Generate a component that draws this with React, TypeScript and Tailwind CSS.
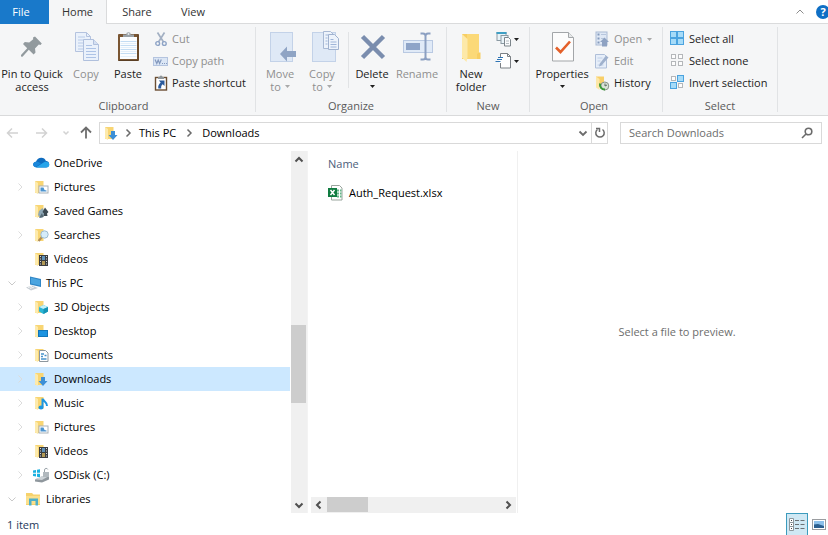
import type { ReactNode } from 'react';

const TABS = ['Share', 'View'];

type IconKind =
    | 'onedrive' | 'pictures' | 'games' | 'searches' | 'videos' | 'pc' | 'objects'
    | 'desktop' | 'documents' | 'downloads' | 'music' | 'disk' | 'libraries';

interface TreeItem {
    label: string;
    icon: IconKind;
    root?: boolean;
    arrow?: boolean;
    selected?: boolean;
}

const TREE: TreeItem[] = [
    { label: 'OneDrive', icon: 'onedrive' },
    { label: 'Pictures', icon: 'pictures', arrow: true },
    { label: 'Saved Games', icon: 'games' },
    { label: 'Searches', icon: 'searches', arrow: true },
    { label: 'Videos', icon: 'videos' },
    { label: 'This PC', icon: 'pc', root: true, arrow: true },
    { label: '3D Objects', icon: 'objects', arrow: true },
    { label: 'Desktop', icon: 'desktop', arrow: true },
    { label: 'Documents', icon: 'documents', arrow: true },
    { label: 'Downloads', icon: 'downloads', arrow: true, selected: true },
    { label: 'Music', icon: 'music', arrow: true },
    { label: 'Pictures', icon: 'pictures', arrow: true },
    { label: 'Videos', icon: 'videos', arrow: true },
    { label: 'OSDisk (C:)', icon: 'disk', arrow: true },
    { label: 'Libraries', icon: 'libraries', root: true, arrow: true },
];

// ---------- icons ----------

function Big({ children }: { children: ReactNode }) {
    return <svg className="size-8 shrink-0 overflow-visible" viewBox="0 0 32 32" fill="none">{children}</svg>;
}

function Small({ children }: { children: ReactNode }) {
    return <svg className="size-4 shrink-0 overflow-visible" viewBox="0 0 16 16" fill="none">{children}</svg>;
}

function Caret({ className }: { className: string }) {
    return (
        <svg className={`w-[5px] h-[3px] shrink-0 ${className}`} viewBox="0 0 5 3">
            <path d="M0 0h5L2.5 3z" fill="currentColor" />
        </svg>
    );
}

function Chevron({ dir, className }: { dir: 'up' | 'down' | 'left' | 'right'; className: string }) {
    const paths = {
        up: 'M1.5 6.5 5 3l3.5 3.5',
        down: 'M1.5 3.5 5 7l3.5-3.5',
        left: 'M6.5 1.5 3 5l3.5 3.5',
        right: 'M3.5 1.5 7 5 3.5 8.5',
    };
    return (
        <svg className={`size-[10px] shrink-0 ${className}`} viewBox="0 0 10 10" fill="none" stroke="currentColor">
            <path d={paths[dir]} />
        </svg>
    );
}

const PinIcon = () => (
    <Big>
        <path d="M19 5.5 25.8 12.5 24.5 14 22.8 13.5 19 17.5 19.5 21.5 17.6 23.500 12.8 18.8 6.5 25.7 5 25.5 5 24 11.2 17.2 7 12.9 8.8 11 13.2 11.6 17.2 8.2 17 6.6z" fill="#929a9e" />
    </Big>
);

const CopyIcon = () => (
    <Big>
        <path d="M5.5 1.5h11l4 4v15h-15z" fill="#eaf1fb" stroke="#b4c3df" />
        <path d="M16.5 1.5v4h4" stroke="#b4c3df" />
        <path d="M8 6h7M8 9h10M8 12h5M8 15h5M8 18h5" stroke="#b8cbe8" />
        <path d="M13.5 8.5h10l5 5v16h-15z" fill="#eaf1fb" stroke="#b0c0dd" />
        <path d="M23.5 8.5v5h5" fill="#d5e0f2" stroke="#b0c0dd" />
        <path d="M16 14.5h6M16 17.5h10M16 20.5h10M16 23.5h10M16 26.5h10" stroke="#adc3e6" />
    </Big>
);

const PasteIcon = () => (
    <Big>
        <rect x="6" y="3" width="21" height="27" rx="1" fill="#7a5633" />
        <path d="M26 3.5v26H6.5" stroke="#5b3f25" />
        <rect x="8" y="6" width="17" height="22" fill="#fbfdff" />
        <path d="M8.500 10.5h16M8.500 14.5h16M8.500 18.5h16M8.500 22.5h16" stroke="#c3dcf3" />
        <path d="M8.500 12.5h16M8.500 16.5h16M8.500 20.5h16M8.500 25.5h16" stroke="#e3effa" />
        <path d="M11 6V3.500h3.200a2.300 2.300 0 0 1 4.600 0H22V6z" fill="#9aa2a8" />
        <circle cx="16.500" cy="3" r="1" fill="#e8ecee" />
    </Big>
);

const CutIcon = () => (
    <Small>
        <path d="M4.500 1.500 10.500 11M11.500 1.500 5.500 11" stroke="#a3b0c3" strokeWidth="1.700" />
        <circle cx="4.700" cy="12.500" r="1.900" stroke="#8da3c6" strokeWidth="1.400" />
        <circle cx="11.300" cy="12.500" r="1.900" stroke="#8da3c6" strokeWidth="1.400" />
    </Small>
);

const CopyPathIcon = () => (
    <Small>
        <rect x="0.500" y="4.500" width="14" height="8" fill="#dbe6f5" stroke="#b4c4df" />
        <path d="M2 6.500 3.800 10.500 5.200 7 6.600 10.500 8.300 6.500" stroke="#8499be" strokeWidth="1.200" />
        <path d="M9 10.500h1M11 10.500h1M13 10.500h1" stroke="#8499be" />
    </Small>
);

const PasteShortcutIcon = () => (
    <Small>
        <rect x="2.500" y="2.500" width="11" height="12.500" fill="#fff" stroke="#6b4e33" strokeWidth="1.400" />
        <path d="M5 4V2h1.500a1.500 1.500 0 0 1 3 0H11v2z" fill="#8e959a" />
        <path d="M5.800 5.500H11.500V11L9.700 9.300C8.400 10.400 8 11.500 8.200 13.500H5.300C4.800 11 5.800 9 7.700 7.400z" fill="#2b5a9c" />
    </Small>
);

const MoveIcon = () => (
    <Big>
        <rect x="6.500" y="1.500" width="22" height="29" fill="#dfe9f6" stroke="#c3d2e8" />
        <path d="M16 23 23 15.500V20h9v6h-9v4.500z" fill="#8fa4c4" />
    </Big>
);

const CopyToIcon = () => (
    <Big>
        <rect x="6.500" y="1.500" width="23" height="29" fill="#dfe9f6" stroke="#c3d2e8" />
        <path d="M17.500.500h7l3 3v14h-10z" fill="#edf3fb" stroke="#a8b9d4" />
        <path d="M22.500 3.500h6l4 4v11h-10z" fill="#edf3fb" stroke="#a0b2cf" />
        <path d="M19.500 4h3M19.500 7h2M19.500 10h2M19.500 13h2M24.500 8.500h3M24.500 11h6M24.500 13.500h6M24.500 16h6" stroke="#9fb5d8" />
    </Big>
);

const DeleteIcon = () => (
    <Big>
        <path d="M6.500 5.500 27.500 26.500M27.500 5.500 6.500 26.500" stroke="#7a8dae" strokeWidth="4.500" />
    </Big>
);

const RenameIcon = () => (
    <Big>
        <rect x="2.500" y="9.500" width="29" height="12" fill="#e0eaf7" stroke="#b9c9e2" />
        <rect x="5" y="12" width="14" height="7" fill="#8ea4c8" />
        <path d="M24.500 4v23M19.500 2.500h2.500q2.500 0 2.500 2.500 0-2.500 2.500-2.500h2.500M19.500 28.500h2.500q2.500 0 2.500-2.500 0 2.500 2.500 2.500h2.500" stroke="#8b9fc1" strokeWidth="2" />
    </Big>
);

const NewFolderIcon = () => (
    <Big>
        <path d="M7 3h17v18.500h1.500V28H7z" fill="#f7ce63" />
        <path d="M12 3h12v18.500l-2 1.500V28H12z" fill="#fbd978" />
        <path d="M7 3 12.500 8V26l-1 5L7 26.500z" fill="#fde9a9" />
    </Big>
);

const NewItemIcon = () => (
    <Small>
        <rect x="1" y="1.500" width="9" height="8" fill="#e8f3f8" stroke="#8b9aa3" />
        <path d="M.500 2h10" stroke="#3f9fc4" strokeWidth="2" />
        <rect x="5" y="4.500" width="7" height="8" fill="#eaf4f9" stroke="#8b9aa3" />
        <path d="M8.500 6.500h4l2 2v6.500h-6z" fill="#fafbfc" stroke="#7c858b" />
        <path d="M10 10h3M10 12.500h3" stroke="#b5bdc2" />
    </Small>
);

const EasyAccessIcon = () => (
    <Small>
        <path d="M4.500.500h7l3 3v11.500h-10z" fill="#fff" stroke="#7b8085" />
        <path d="M11.500.500v3h3" stroke="#7b8085" />
        <path d="M3 10V4h3v6z" fill="#fff" />
        <path d="M2 4.500h5M1 6.500h5M-.500 8.500h5" stroke="#2f75b5" strokeWidth="1.200" />
    </Small>
);

const PropertiesIcon = () => (
    <Big>
        <path d="M6.500 1.500h16l5 5v23.500h-21z" fill="#fcfcfc" stroke="#a3a6a9" />
        <path d="M22.500 1.500v5h5" fill="#e7e9ea" stroke="#a3a6a9" />
        <path d="M10 16.500 14.500 21 24 10.500" stroke="#e4602a" strokeWidth="2.600" />
    </Big>
);

const OpenIcon = () => (
    <Small>
        <rect x="1" y="1" width="11" height="13" fill="#dfe8f5" stroke="#a9b9d3" />
        <path d="M3.500 2.500v2M3.500 6.500v2M3.500 10.500v2" stroke="#8499bb" strokeWidth="2" />
        <path d="M6 3.500h5M6 7.500h3" stroke="#b7c6dd" />
        <path d="M9.500 6.500 14 11h-2v4.500H7V11H5z" fill="#8ea2c2" />
    </Small>
);

const EditIcon = () => (
    <Small>
        <path d="M.500 1.500h9l2 2v11.500h-11z" fill="#e6eef9" stroke="#afbfd9" />
        <path d="M2.500 5h5M2.500 8h3M2.500 12h6" stroke="#c0d0e8" />
        <path d="M11 2.500 13.500 4.500 6.500 12.500 4 13.500 4.800 10.500z" fill="#9fb1cd" />
    </Small>
);

const HistoryIcon = () => (
    <Small>
        <path d="M1 1.500h8V12H1z" fill="#f8cf68" />
        <path d="M1 1.500 4.500 4v11L1 12.500z" fill="#fde7a6" />
        <circle cx="9.800" cy="11" r="4" fill="#d9e2d7" stroke="#859286" />
        <path d="M10 8.500V11l2-1" stroke="#5d6a60" />
        <path d="M5 8.500c-.500 3.500 1.500 6 5 6" stroke="#3c9a3a" strokeWidth="2" />
    </Small>
);

function SelectIcon({ filled }: { filled: boolean[] }) {
    const cells = [[1, 1], [8, 1], [1, 8], [8, 8]];
    return (
        <Small>
            {cells.map(([x, y], i) => filled[i] ? (
                <rect key={i} x={x - 0.5} y={y - 0.5} width="6" height="6" fill="#a6dbf8" stroke="#4ba3df" />
            ) : (
                <rect key={i} x={x + 0.5} y={y + 0.5} width="4" height="4" fill="#fdfdfd" stroke="#b4b7ba" />
            ))}
        </Small>
    );
}

function FolderBase() {
    return (
        <>
            <path d="M1 2h8.500v12H1z" fill="#f8d573" />
            <path d="M1 2 4 4v11L1 13.500z" fill="#fdeaac" />
        </>
    );
}

function TreeIcon({ kind }: { kind: IconKind }) {
    switch (kind) {
        case 'onedrive':
            return (
                <Small>
                    <path d="M3 12.500C.500 12.500-1 11-.800 9.200-.600 7.700.500 7 2 6.700 3 4 5 2.700 7.500 2.800c2 0 3.600 1.200 4.300 3 2 .300 3.400 1.500 3.400 3.400 0 2-1.200 3.300-3.200 3.300z" fill="#0f6cbf" />
                    <path d="M2 12.200 10 7.200c2.500-1 5.300 0 5.300 2.500 0 1.800-1.300 2.800-3.300 2.800H3z" fill="#27a4ea" />
                    <path d="M2 6.700c2-.200 3 .300 5 1.800L1.500 12C-.500 11.300-1 10.300-.800 9.200-.600 7.700.500 7 2 6.700z" fill="#1a87da" />
                </Small>
            );
        case 'pc':
            return (
                <Small>
                    <path d="M4 1.500 15 4v8L4 9.500z" fill="#2f86c6" />
                    <path d="M5 2.800 14 5v5.500L5 8.500z" fill="#4aa5e0" />
                    <path d="M0 12.500 6 10.500 12 13 5 15.500z" fill="#c7ced4" />
                    <path d="M2 12.500 6 11.300M4 13.500 8 12" stroke="#f3f5f6" />
                </Small>
            );
        case 'disk':
            return (
                <Small>
                    <path d="M-1 3.500 2 3v2.800h-3zM3 2.800 6 2.300v3.500H3zM-1 6.800h3v2.800l-3-.500zM3 6.800h3v3.500L3 9.800z" fill="#19b0e0" />
                    <path d="M1 12.500 8 9.500h7v3L8 15.500 1 14.500z" fill="#8f979d" />
                    <path d="M1 12.200 8 9h7L8 13z" fill="#cdd3d7" />
                    <rect x="9" y="5" width="6" height="5" fill="#b1b9be" />
                    <path d="M10.500 5V3a1.700 1.700 0 0 1 3.300-.500" stroke="#9ba4aa" />
                </Small>
            );
        case 'libraries':
            return (
                <Small>
                    <path d="M0 2h6l1.500 1.500H14V14H0z" fill="#f6d26c" />
                    <path d="M0 5h14v8H0z" fill="#fbe08c" />
                    <path d="M3 14.500V7.500h9v7H9.500V10h-4v4.500z" fill="#4fb0c9" />
                </Small>
            );
        case 'pictures':
            return (
                <Small>
                    <FolderBase />
                    <rect x="5" y="7" width="9" height="7" fill="#fff" stroke="#a9b1b7" />
                    <path d="M6.500 12.500v-4h3l1 2.500 2 .500v1z" fill="#4c94cf" />
                </Small>
            );
        case 'games':
            return (
                <Small>
                    <FolderBase />
                    <path d="M5 8 8.500 5 11 9l-1.500 5-3 1L4 12z" fill="#8fa9b8" />
                    <path d="M11 4.500 12.500 6.500 14.500 9 13 10.500l.500 2.500h-4l.500-2.500L8.500 9z" fill="#3d4a52" />
                    <path d="M5 15 8 10l1.500 4z" fill="#566a76" />
                </Small>
            );
        case 'searches':
            return (
                <Small>
                    <FolderBase />
                    <path d="M8 10 4.500 14" stroke="#b08d57" strokeWidth="2" />
                    <circle cx="10.500" cy="7.500" r="3.700" fill="#d5ecfa" stroke="#9dbcd0" />
                </Small>
            );
        case 'videos':
            return (
                <Small>
                    <FolderBase />
                    <rect x="5" y="4" width="9" height="11" fill="#3b3d40" />
                    <path d="M6 5.500h1M6 8h1M6 10.500h1M6 13h1M12 5.500h1M12 8h1M12 10.500h1M12 13h1" stroke="#d7d9da" />
                    <path d="M8 5h3v4H8z" fill="#5f91b8" />
                    <path d="M8 10h3v4H8z" fill="#b39a55" />
                </Small>
            );
        case 'objects':
            return (
                <Small>
                    <FolderBase />
                    <path d="M9.500 6 14 8v4.500l-4.500 2.500L5 12.500V8z" fill="#2bb6d6" />
                    <path d="M9.500 6 14 8l-4.500 2L5 8z" fill="#c4f0f8" />
                    <path d="M9.500 10 14 8v4.500l-4.500 2.500z" fill="#1593b5" />
                </Small>
            );
        case 'desktop':
            return (
                <Small>
                    <FolderBase />
                    <rect x="4.500" y="7.500" width="9" height="6" fill="#1c93e0" stroke="#1175b8" />
                </Small>
            );
        case 'documents':
            return (
                <Small>
                    <FolderBase />
                    <path d="M5.500 3.500h6l2.500 2.500v8.500H5.500z" fill="#fff" stroke="#8d979e" />
                    <path d="M7 7h3M7 9.500h2M10.500 8.500h2M7 12h5.500" stroke="#4792cc" strokeWidth="1.400" />
                </Small>
            );
        case 'downloads':
            return (
                <Small>
                    <FolderBase />
                    <path d="M7 6h4v4h2.500L9 15 4.500 10H7z" fill="#3c8fd6" />
                </Small>
            );
        case 'music':
            return (
                <Small>
                    <FolderBase />
                    <path d="M8.500 3.500v8.500M9 4c.500 3 4.500 3 4 7" stroke="#1d97e3" strokeWidth="2" />
                    <ellipse cx="7" cy="12.500" rx="2.500" ry="2" fill="#1d97e3" />
                </Small>
            );
    }
}

const ExcelIcon = () => (
    <Small>
        <path d="M3.500.500h8l2.500 2.500v12h-10.500z" fill="#fff" stroke="#9aa59e" />
        <path d="M9 5.500h4.500M9 8.500h4.500M9 11.500h4.500" stroke="#62b587" strokeWidth="2" />
        <path d="M11.500 4v9" stroke="#fff" />
        <rect x="0" y="3" width="9" height="9" fill="#107c41" />
        <path d="M2.500 5 6.500 10M6.500 5 2.500 10" stroke="#fff" strokeWidth="1.500" />
    </Small>
);

// ---------- ribbon ----------

interface BigButtonProps {
    icon: ReactNode;
    lines: string[];
    width: string;
    caret?: boolean;
    disabled?: boolean;
}

function BigButton({ icon, lines, width, caret, disabled }: BigButtonProps) {
    const caretColor = disabled ? 'text-[#a9a9a9]' : 'text-[#1f1f1f]';
    const inline = caret && lines.length > 1;
    return (
        <button disabled={disabled} className={`flex flex-col items-center pt-[7px] gap-1 whitespace-nowrap ${width} ${disabled ? 'text-[#8f8f8f]' : 'text-[#222222]'}`}>
            {icon}
            <span className="flex flex-col items-center leading-[13px]">
                {lines.map((line, i) => (
                    <span key={line} className="flex items-center gap-1">
                        {line}
                        {inline && i === lines.length - 1 && <Caret className={caretColor} />}
                    </span>
                ))}
                {caret && !inline && <span className="flex h-3 items-center"><Caret className={caretColor} /></span>}
            </span>
        </button>
    );
}

function SmallButton({ icon, label, caret, disabled }: { icon: ReactNode; label: string; caret?: boolean; disabled?: boolean }) {
    return (
        <button disabled={disabled} className={`flex h-[22px] items-center gap-[3px] whitespace-nowrap ${disabled ? 'text-[#8f8f8f]' : 'text-[#222222]'}`}>
            {icon}
            <span>{label}</span>
            {caret && <span className="pl-0.5"><Caret className="text-[#a9a9a9]" /></span>}
        </button>
    );
}

function Group({ name, width, children }: { name: string; width: string; children: ReactNode }) {
    return (
        <section aria-label={name} className={`flex shrink-0 flex-col ${width}`}>
            <div className="flex h-[73px] items-start">{children}</div>
            <div className="text-center leading-[18px] text-[#5a5a5a]">{name}</div>
        </section>
    );
}

const Divider = () => <div className="my-[3px] w-px shrink-0 bg-[#e1e3e5]" />;

function Ribbon() {
    return (
        <div className="flex shrink-0 overflow-hidden border-b border-[#d9dadb] bg-[#f5f6f7]">
            <Group name="Clipboard" width="w-[255px] pr-2">
                <BigButton icon={<PinIcon />} lines={['Pin to Quick', 'access']} width="w-16" />
                <BigButton icon={<CopyIcon />} lines={['Copy']} width="w-11" disabled />
                <BigButton icon={<PasteIcon />} lines={['Paste']} width="w-10" />
                <div className="flex flex-col pt-1 pl-[5px]">
                    <SmallButton icon={<CutIcon />} label="Cut" disabled />
                    <SmallButton icon={<CopyPathIcon />} label="Copy path" disabled />
                    <SmallButton icon={<PasteShortcutIcon />} label="Paste shortcut" />
                </div>
            </Group>
            <Divider />
            <Group name="Organize" width="w-[190px]">
                <BigButton icon={<MoveIcon />} lines={['Move', 'to']} width="w-12" caret disabled />
                <BigButton icon={<CopyToIcon />} lines={['Copy', 'to']} width="w-9" caret disabled />
                <div className="ml-2 mt-2 h-14 w-px bg-[#e1e3e5]" />
                <BigButton icon={<DeleteIcon />} lines={['Delete']} width="w-[46px]" caret />
                <BigButton icon={<RenameIcon />} lines={['Rename']} width="w-11" disabled />
            </Group>
            <Divider />
            <Group name="New" width="w-[82px]">
                <BigButton icon={<NewFolderIcon />} lines={['New', 'folder']} width="w-12" />
                <div className="flex flex-col pt-1 pl-px">
                    <button aria-label="New item" className="flex h-[22px] items-center gap-0.5"><NewItemIcon /><Caret className="text-[#1f1f1f]" /></button>
                    <button aria-label="Easy access" className="flex h-[22px] items-center gap-0.5"><EasyAccessIcon /><Caret className="text-[#1f1f1f]" /></button>
                </div>
            </Group>
            <Divider />
            <Group name="Open" width="w-[132px] pr-1">
                <BigButton icon={<PropertiesIcon />} lines={['Properties']} width="w-16" caret />
                <div className="flex flex-col pt-1 pl-px">
                    <SmallButton icon={<OpenIcon />} label="Open" caret disabled />
                    <SmallButton icon={<EditIcon />} label="Edit" disabled />
                    <SmallButton icon={<HistoryIcon />} label="History" />
                </div>
            </Group>
            <Divider />
            <Group name="Select" width="w-[114px]">
                <div className="flex flex-col pt-1 pl-[7px]">
                    <SmallButton icon={<SelectIcon filled={[true, true, true, true]} />} label="Select all" />
                    <SmallButton icon={<SelectIcon filled={[false, false, false, false]} />} label="Select none" />
                    <SmallButton icon={<SelectIcon filled={[false, true, true, false]} />} label="Invert selection" />
                </div>
            </Group>
            <Divider />
        </div>
    );
}

function TabBar() {
    return (
        <div className="flex h-6 shrink-0 items-stretch bg-white text-[#333333]">
            <button className="w-[49px] bg-[#1979ca] pr-[7px] text-white">File</button>
            <button className="-mb-px w-[58px] border-r border-[#dadbdc] bg-[#f5f6f7] pb-px">Home</button>
            <div className="flex flex-1 border-b border-[#dadbdc] pl-0.5">
                {TABS.map((tab) => <button key={tab} className="w-14">{tab}</button>)}
                <div className="ml-auto flex items-center gap-[11px]">
                    <button aria-label="Minimize the Ribbon"><Chevron dir="up" className="text-[#8c8c8c]" /></button>
                    <button aria-label="Help" className="-mr-0.5 flex size-[14px] items-center justify-center rounded-full bg-[#0f6fc5] text-[11px] leading-none font-bold text-white">?</button>
                </div>
            </div>
        </div>
    );
}

function AddressBar() {
    return (
        <div className="flex h-[35px] shrink-0 items-center pr-[6px] pb-[2px]">
            <div className="flex w-[99px] shrink-0 items-center text-[#d2d2d2]">
                <button aria-label="Back" className="ml-[6px]">
                    <svg className="h-3 w-[13px]" viewBox="0 0 13 12" fill="none" stroke="currentColor" strokeWidth="1.5"><path d="M12 6H1.500M6 1.500 1.500 6 6 10.500" /></svg>
                </button>
                <button aria-label="Forward" className="ml-4">
                    <svg className="h-3 w-[13px]" viewBox="0 0 13 12" fill="none" stroke="currentColor" strokeWidth="1.5"><path d="M1 6h10.500M7 1.500 11.500 6 7 10.500" /></svg>
                </button>
                <button aria-label="Recent locations" className="ml-[14px]">
                    <svg className="h-1.5 w-2" viewBox="0 0 8 6" fill="none" stroke="currentColor" strokeWidth="1.5"><path d="M1.500 1.500 4 4l2.500-2.500" /></svg>
                </button>
                <button aria-label="Up" className="ml-[10px] text-[#6e6e6e]">
                    <svg className="h-[13px] w-3" viewBox="0 0 12 13" fill="none" stroke="currentColor" strokeWidth="1.8"><path d="M6 12.500V1.500M1 6.500l5-5 5 5" /></svg>
                </button>
            </div>
            <nav aria-label="Address" className="flex h-[22px] flex-1 items-center border border-[#d9d9d9] bg-white pl-1">
                <TreeIcon kind="downloads" />
                <Chevron dir="right" className="ml-[3px] stroke-[1.5] text-[#6b6b6b]" />
                <button className="ml-[6px]">This PC</button>
                <Chevron dir="right" className="ml-2 stroke-[1.5] text-[#6b6b6b]" />
                <button className="ml-2">Downloads</button>
                <button aria-label="Previous locations" className="mr-[3px] ml-auto"><Chevron dir="down" className="stroke-[1.8] text-[#6b6b6b]" /></button>
                <button aria-label="Refresh" className="flex h-full w-4 items-center justify-center border-l border-[#d9d9d9]">
                    <svg className="size-3" viewBox="0 0 12 12" fill="none" stroke="#6b6b6b" strokeWidth="1.5">
                        <path d="M8.500 2.500A4.200 4.200 0 1 1 3.500 2.500" />
                        <path d="M2 1.500h3.500V5" />
                    </svg>
                </button>
            </nav>
            <div className="ml-3 flex h-[22px] w-[202px] shrink-0 items-center border border-[#d9d9d9] bg-white px-2">
                <input aria-label="Search Downloads" placeholder="Search Downloads" className="min-w-0 flex-1 bg-transparent outline-none placeholder:text-[#6d6d6d]" />
                <svg className="size-3" viewBox="0 0 12 12" fill="none" stroke="#6b6b6b" strokeWidth="1.6">
                    <circle cx="7.500" cy="4.500" r="3.300" />
                    <path d="M5 7 1 11" />
                </svg>
            </div>
        </div>
    );
}

// ---------- body ----------

function Tree() {
    return (
        <nav aria-label="Navigation pane" className="mr-px min-w-0 flex-1 overflow-hidden">
            <ul>
                {TREE.map((item, i) => (
                    <li key={i}>
                        <button className={`flex h-6 w-full items-center ${item.root ? 'pl-[7px]' : 'pl-[15px]'} ${item.selected ? 'bg-[#cce8ff]' : ''}`}>
                            <span className="flex w-[19px] shrink-0">
                                {item.arrow && <Chevron dir={item.root ? 'down' : 'right'} className={item.root ? 'text-[#c9c9c9]' : 'text-[#dcdcdc]'} />}
                            </span>
                            <TreeIcon kind={item.icon} />
                            <span className="pl-1">{item.label}</span>
                        </button>
                    </li>
                ))}
            </ul>
        </nav>
    );
}

function VerticalScrollbar() {
    return (
        <div className="flex w-4 shrink-0 flex-col bg-[#f0f0f0] text-[#505050]">
            <button aria-label="Scroll up" className="flex h-[17px] items-center justify-center"><Chevron dir="up" className="stroke-2" /></button>
            <div className="grow-[157]" />
            <div className="mr-px grow-[78] bg-[#cdcdcd]" />
            <div className="grow-[93]" />
            <button aria-label="Scroll down" className="flex h-[17px] items-center justify-center"><Chevron dir="down" className="stroke-2" /></button>
        </div>
    );
}

function HorizontalScrollbar() {
    return (
        <div className="flex h-4 bg-[#f0f0f0] text-[#505050]">
            <button aria-label="Scroll left" className="flex w-4 items-center justify-center"><Chevron dir="left" className="stroke-2" /></button>
            <div className="mb-px grow-[41] bg-[#cdcdcd]" />
            <div className="grow-[132]" />
            <button aria-label="Scroll right" className="flex w-4 items-center justify-center"><Chevron dir="right" className="stroke-2" /></button>
        </div>
    );
}

function FileList() {
    return (
        <div className="flex w-[209px] shrink-0 flex-col pr-px pl-[3px]">
            <div className="flex-1">
                <table className="w-full text-left">
                    <thead>
                        <tr><th className="h-[26px] pl-[17px] font-normal text-[#4c607a]">Name</th></tr>
                    </thead>
                    <tbody>
                        <tr>
                            <td className="h-8 pl-[17px]">
                                <span className="flex items-center gap-[5px]"><ExcelIcon />Auth_Request.xlsx</span>
                            </td>
                        </tr>
                    </tbody>
                </table>
            </div>
            <HorizontalScrollbar />
        </div>
    );
}

function StatusBar() {
    return (
        <footer className="flex h-[22px] shrink-0 items-stretch pl-[7px] text-[#1e395b]">
            <span className="self-center pt-px">1 item</span>
            <button aria-label="Details view" className="ml-auto flex w-[22px] items-center justify-center border border-b-0 border-[#3c9bbd] bg-[#cfe8f4]">
                <svg className="h-[14px] w-4" viewBox="0 0 16 14" fill="none">
                    <path d="M.500.500h4v12h-4zM.500 4.500h4M.500 8.500h4" fill="#fff" stroke="#8d979c" />
                    <path d="M2 2.500h1M2 6.500h1M2 10.500h1" stroke="#444" />
                    <path d="M6 2.500h4M11.500 2.500h4M6 6.500h4M11.500 6.500h4M6 10.500h4M11.500 10.500h4" stroke="#6b7175" />
                </svg>
            </button>
            <button aria-label="Large thumbnails" className="flex w-5 items-center justify-end pr-0.5">
                <svg className="h-[11px] w-[14px]" viewBox="0 0 14 11">
                    <rect x=".5" y=".5" width="13" height="10" fill="#fff" stroke="#9a9da0" />
                    <path d="M2 2h10v7H2z" fill="#8cc0ea" />
                    <path d="M2 5.500 6 5l6 2v2H2z" fill="#2b5f8f" />
                </svg>
            </button>
        </footer>
    );
}

export default function App() {
    return (
        <div className="flex h-screen flex-col overflow-hidden bg-white font-['Open_Sans',sans-serif] text-[11px] leading-4 text-black">
            <TabBar />
            <Ribbon />
            <AddressBar />
            <main className="flex min-h-0 flex-1">
                <div className="flex w-[308px] shrink-0 border-r border-[#f3f3f3]">
                    <Tree />
                    <VerticalScrollbar />
                </div>
                <FileList />
                <aside aria-label="Preview" className="flex flex-1 items-center justify-center border-l border-[#f0f0f0] pl-2 text-[#6d6d6d]">
                    Select a file to preview.
                </aside>
            </main>
            <StatusBar />
        </div>
    );
}
